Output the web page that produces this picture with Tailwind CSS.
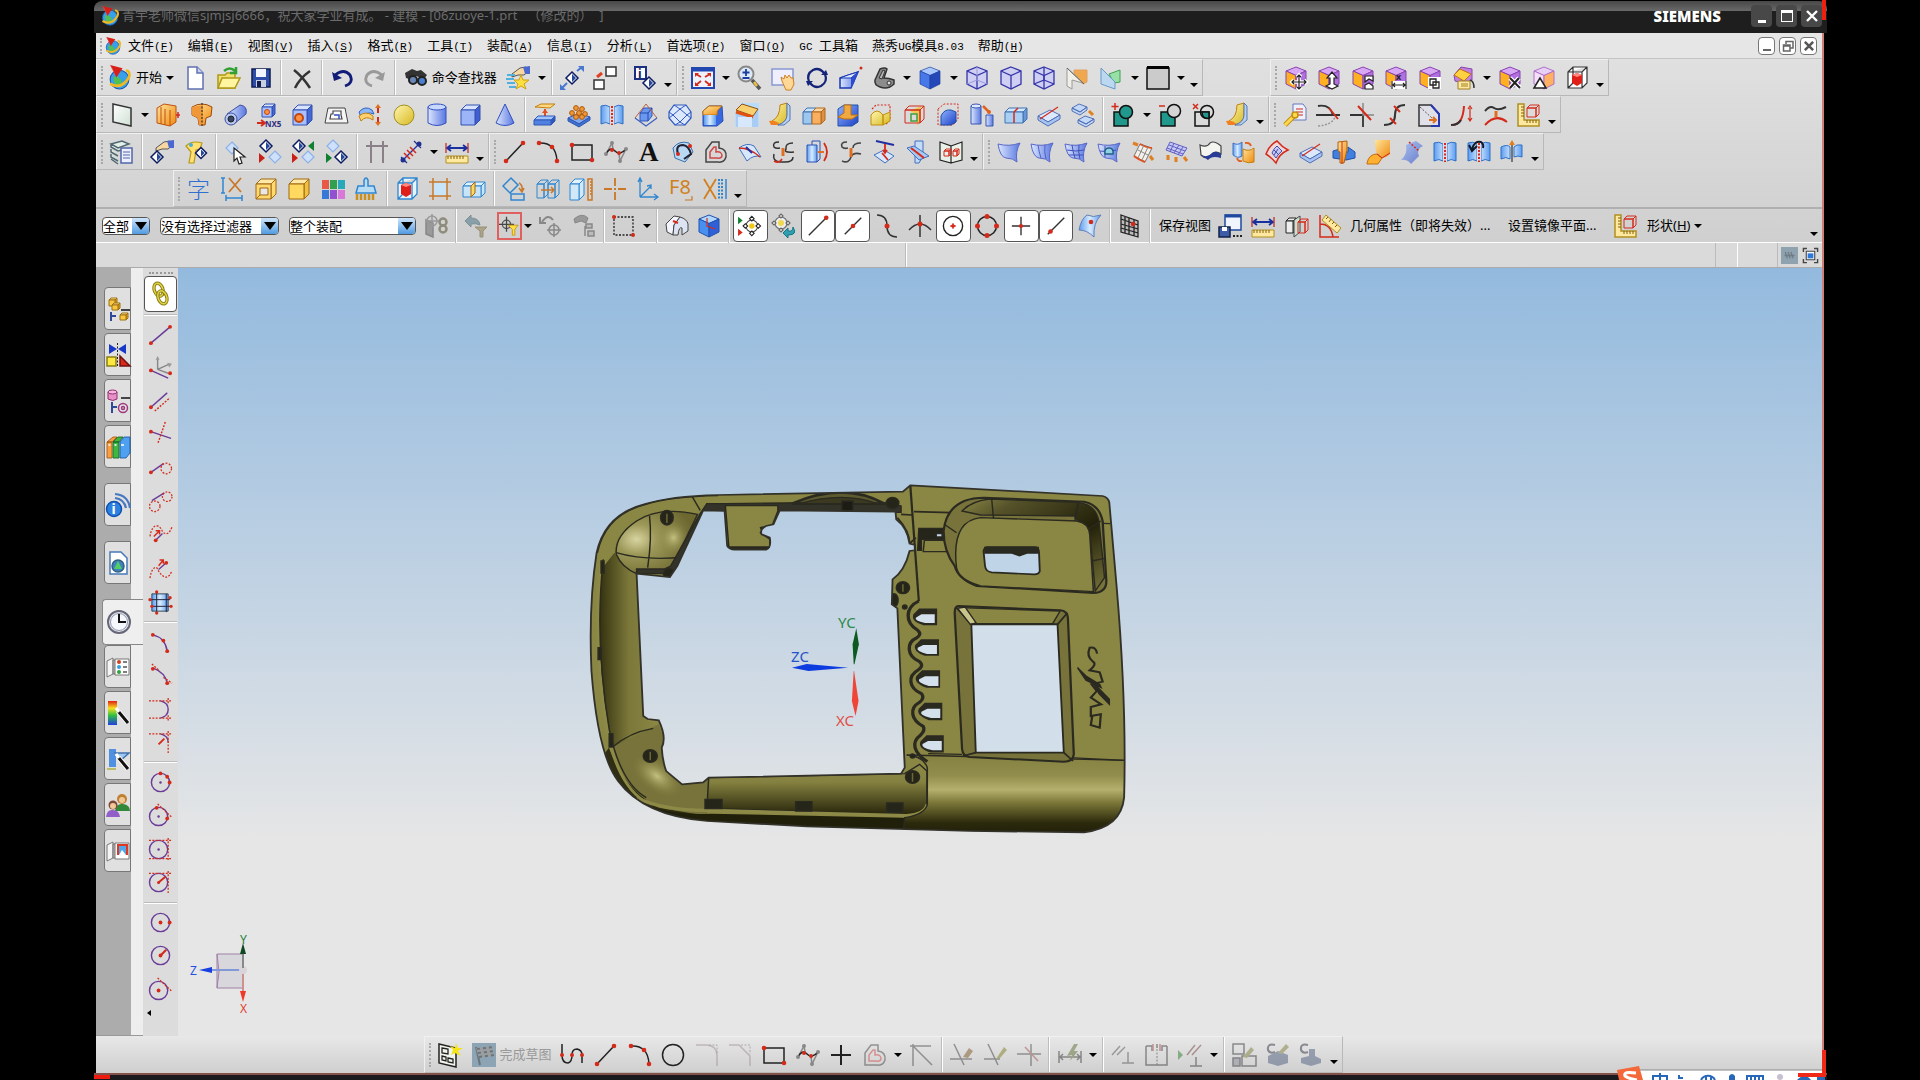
<!DOCTYPE html>
<html lang="zh-CN">
<head>
    <meta charset="UTF-8">
    <meta name="viewport" content="width=device-width, initial-scale=1.0">
    <title>建模 - [06zuoye-1.prt]</title>
    <script src="https://cdn.jsdelivr.net/npm/@tailwindcss/browser@4"></script>
</head>
<body class="bg-black font-['Noto_Sans','Noto_Sans_CJK_SC',sans-serif] text-[13px] text-black">
<!-- shared paints -->
<svg class="absolute w-0 h-0" aria-hidden="true">
    <defs>
        <linearGradient id="gB" x2="1"><stop stop-color="#dbe6ff"/><stop offset="1" stop-color="#5a78e0"/></linearGradient>
        <linearGradient id="gD" x2="1" y2="1"><stop stop-color="#8fb4ff"/><stop offset="1" stop-color="#1c3fc4"/></linearGradient>
        <linearGradient id="gC" x2="1"><stop stop-color="#5c9cf0"/><stop offset=".5" stop-color="#d8ecff"/><stop offset="1" stop-color="#5c9cf0"/></linearGradient>
        <linearGradient id="gO" x2="1" y2="1"><stop stop-color="#ffe49a"/><stop offset="1" stop-color="#f08a10"/></linearGradient>
        <linearGradient id="gY" x2="1" y2="1"><stop stop-color="#fff6b0"/><stop offset="1" stop-color="#d8b820"/></linearGradient>
        <linearGradient id="gW" x2="1" y2="1"><stop stop-color="#fff"/><stop offset="1" stop-color="#cfe0d4"/></linearGradient>
        <linearGradient id="gR" x2="0" y2="1"><stop stop-color="#e02010"/><stop offset=".3" stop-color="#f8e020"/><stop offset=".6" stop-color="#30c040"/><stop offset="1" stop-color="#2040e0"/></linearGradient>
    </defs>
</svg>

<div class="min-h-screen flex flex-col ml-[94px] mr-[93px] pt-px">
    <header class="h-8 flex items-center shrink-0 rounded-t-lg pl-1.5 pb-0.5 bg-linear-to-b from-[#484848] from-0% via-[#686868] via-30% to-[#1e1e1e] to-30%">
        <span data-icon="logo" class="w-5 h-5"></span>
        <h1 class="ml-0.5 text-[#6c6c6c] whitespace-pre">青宇老师微信sjmjsj6666，祝大家学业有成。 - 建模 - [06zuoye-1.prt   （修改的）  ]</h1>
        <span class="ml-auto font-black text-white text-[15px]">SIEMENS</span>
        <div class="flex gap-1 ml-[30px] mr-[5px]">
            <button class="w-[21px] h-[22px] rounded-sm bg-[#484848] flex items-end justify-center pb-1"><span class="w-2 h-[3px] bg-white"></span></button>
            <button class="w-[21px] h-[22px] rounded-sm bg-[#484848] flex items-center justify-center"><span class="w-3 h-3 border border-t-3 border-white"></span></button>
            <button class="w-[21px] h-[22px] rounded-sm bg-[#484848] flex items-center justify-center"><svg class="w-3 h-3" viewBox="0 0 12 12"><path d="M1 1L11 11M11 1L1 11" stroke="#fff" stroke-width="2.4"/></svg></button>
        </div>
    </header>

    <div class="flex-1 flex flex-col ml-0.5 mr-[3px] border-r-2 border-[#d08078] bg-[#e6e6e6]">
        <nav class="h-[26px] flex items-center shrink-0 bg-[#e6e6e6] border-b border-[#c4c4c4]">
            <span class="w-[3px] h-4 ml-1 border-l-2 border-dotted border-[#aaa]"></span>
            <span data-icon="logo" class="w-[18px] h-[18px] ml-px mr-1.5"></span>
            <div id="menu" class="flex gap-[14px] whitespace-pre"></div>
            <div class="flex gap-1 ml-auto mr-[5px]">
                <button class="w-[17px] h-[18px] rounded border border-[#777] bg-white flex items-end justify-center pb-[3px]"><span class="w-2 h-0.5 bg-[#666]"></span></button>
                <button class="w-[17px] h-[18px] rounded border border-[#777] bg-white flex items-center justify-center"><svg class="w-3 h-3" viewBox="0 0 12 12"><path d="M4 4V1.500H11V8H8M1.500 5H8V11H1.500ZM1 6H8" fill="none" stroke="#666" stroke-width="1.500"/></svg></button>
                <button class="w-[17px] h-[18px] rounded border border-[#777] bg-white flex items-center justify-center"><svg class="w-2.5 h-2.5" viewBox="0 0 12 12"><path d="M1 1L11 11M11 1L1 11" stroke="#555" stroke-width="3"/></svg></button>
            </div>
        </nav>

        <section class="shrink-0 bg-linear-to-b from-[#e0e0e0] to-[#cdcdcd]">
            <div class="flex h-[37px]">
                <div class="w-[581px]" data-tools="start new open save | del | undo redo | find roles v | move assem | info low"></div>
                <div class="w-[526px]" data-tools="fit v zoom pan rotate persp csys v shade v wire1 wire2 wire3 clipO clipG v bgbox v low"></div>
                <div class="w-[339px] ml-[67px]" data-tools="fMove fPull fOff fDim fPat fCopy v fDel fGrp redbox low"></div>
            </div>
            <div class="flex h-[37px]">
                <div class="w-[1173px]" data-tools="datum v extrude revolve tube nx5 hole pocket offs sphere cyl cube cone | emboss bumps sew brep mesh blend chamf draft split shell boxY boxR boxB inst trim sheet sheets | unite v subtr inter bend low"></div>
                <div class="w-[292px]" data-tools="wrench crvA crvB crvC sect crvD crvE gauge low"></div>
            </div>
            <div class="flex h-[37px]">
                <div class="w-[393px]" data-tools="layers | show paint | sel hide1 hide2 hide3 | grid2 measure v ruler low"></div>
                <div class="w-[494px]" data-tools="line arc rect spline letter offc offp proj join wrapc bridge projd isect mirror low"></div>
                <div class="w-[561px]" data-tools="surf1 surf2 surf3 surf4 surf5 surf6 surf7 surf8 surf9 sheet cross bendO surfT sew sewU sewP low"></div>
            </div>
            <div class="flex h-[37px]">
                <div class="w-[574px] ml-[77px]" data-tools="zi dimX boxO boxS colors brush | redboxB frame boxT | rotT arrT rulT crossT axesT f8 xii low"></div>
            </div>
            <!-- selection bar -->
            <div class="flex items-center h-9 border-t-2 border-[#b0b0b0] border-b border-b-white pl-1.5">
                <label class="combo w-12"><select aria-label="类型"><option>全部</option></select></label>
                <label class="combo w-[119px] ml-2.5"><select aria-label="过滤器"><option>没有选择过滤器</option></select></label>
                <label class="combo w-[127px] ml-2.5"><select aria-label="范围"><option>整个装配</option></select></label>
                <div class="w-[733px] ml-1 mr-1" data-tools="asmG | filtG *filtR v undoG pinG | selbox v | faceW cubeR | *snap0 snap1 *snapE *snapM snapC snapX *snapO snapQ *snapP *snapL snapF | gridR |" data-plain></div>
                <button class="w-14">保存视图</button>
                <div class="w-[134px] mr-[3px]" data-tools="saveV ruler mirR ang" data-plain></div>
                <button class="whitespace-pre w-[158px] text-left">几何属性（即将失效）...</button>
                <button class="whitespace-pre w-[101px] text-left">设置镜像平面...</button>
                <div class="w-[34px]" data-tools="gauge" data-plain></div>
                <button class="flex items-center gap-1 ml-1"><span>形状(<u>H</u>)</span> <i class="tri"></i></button>
                <i class="tri ml-auto mr-1 self-end mb-1.5"></i>
            </div>
            <div class="flex h-[25px] bg-[#dadada] border-b border-[#aaa]">
                <span class="w-[810px] border-r border-[#bbb]"></span>
                <span class="flex-1 border-l border-white border-r border-r-[#bbb]"></span>
                <span class="w-[22px] border-r border-white"></span>
                <span class="w-10 border-r border-[#bbb]"></span>
                <span class="w-[44px] flex gap-1 items-center pl-[3px]">
                    <span data-icon="flagS" class="w-[17px] h-[17px] bg-[#8ea2b0]"></span>
                    <span data-icon="full" class="w-[17px] h-[17px]"></span>
                </span>
            </div>
        </section>

        <main class="flex-1 flex">
            <!-- resource bar -->
            <aside id="tabs" class="w-[47px] bg-linear-to-r from-[#acacac] from-75% to-[#eee] to-75% flex flex-col pt-[19px] border-b border-[#999]"></aside>
            <div class="w-[35px] bg-[#dcdcdc] flex flex-col items-center pb-[14px]">
                <span class="w-6 h-0.5 mt-1 mb-0.5 border-t-2 border-dotted border-[#999]"></span>
                <div id="palette" class="flex-1 flex flex-col w-full px-px"></div>
                <span class="self-start w-0 h-0 ml-1 mb-1.5 mt-1 border-y-3 border-y-transparent border-r-4 border-r-black"></span>
            </div>
            <div class="flex-1 relative overflow-hidden bg-linear-to-b from-[#93bade] to-[#e6e6e6] to-75%">
                <svg class="absolute left-[392px] top-[203px] w-[580px] h-[380px]" viewBox="0 0 1568 1140" preserveAspectRatio="none">
                    <defs>
                        <linearGradient id="mBot" x2="0" y2="1"><stop stop-color="#858141"/><stop offset=".25" stop-color="#918d4c"/><stop offset=".42" stop-color="#b5b06c"/><stop offset=".58" stop-color="#7a7638"/><stop offset=".82" stop-color="#2c2a0c"/><stop offset="1" stop-color="#1c1b08"/></linearGradient>
                        <linearGradient id="mStrip" x2="0" y2="1"><stop stop-color="#8d8947"/><stop offset=".35" stop-color="#858140"/><stop offset="1" stop-color="#26240a"/></linearGradient>
                        <linearGradient id="mLeft" x2="1"><stop stop-color="#33310f"/><stop offset=".5" stop-color="#7c783a"/><stop offset="1" stop-color="#8a8644"/></linearGradient>
                        <linearGradient id="mWell" x2="1" y2="1"><stop stop-color="#8a8644"/><stop offset=".2" stop-color="#55522a"/><stop offset=".6" stop-color="#222109"/><stop offset="1" stop-color="#77733a"/></linearGradient>
                        <radialGradient id="mDome" cx=".25" cy=".45" r=".7"><stop stop-color="#d8d4a0"/><stop offset=".35" stop-color="#9c9858"/><stop offset="1" stop-color="#6c6830"/></radialGradient>
                        <radialGradient id="mGlow"><stop stop-color="#c4c080"/><stop offset="1" stop-color="#8a8644" stop-opacity="0"/></radialGradient>
                        <clipPath id="mClip"><path clip-rule="evenodd" d="M920,43L1440,75Q1455,78 1458,95L1478,350Q1505,700 1498,980Q1490,1070 1390,1084L1080,1080L640,1066L370,1050Q200,1035 130,930Q75,850 58,600Q50,400 72,245Q95,130 200,100Q270,75 400,72L900,62ZM360,118L418,120L425,225Q430,236 445,236L530,236Q545,230 540,200L518,190Q512,175 530,165L550,160L567,118L880,122L882,145Q912,170 918,218L932,222V238L918,240Q905,300 872,325L870,400L885,412L905,890L895,908L375,920L360,934L303,940L260,900Q250,870 248,830Q262,800 240,748L210,744L198,735L180,308L270,318L290,285Z"/></clipPath>
                    </defs>
                    <g clip-path="url(#mClip)" stroke="#2b2a20" stroke-width="4" fill="none">
                        <path d="M0,0H1568V1140H0Z" fill="#8a8644" stroke="none"/>
                        <path d="M120,245Q150,300 182,308L200,740L240,770L118,826Q60,600 88,290Z" fill="url(#mLeft)" stroke="none"/>
                        <path d="M118,826L240,760L303,940L375,920L370,1040Q240,1040 170,960Q125,890 118,826Z" fill="#77733a" stroke="none"/>
                        <ellipse cx="235" cy="915" rx="80" ry="45" transform="rotate(42 235 915)" fill="url(#mGlow)" stroke="none"/>
                        <path d="M105,830Q150,960 240,1010L370,1035V1070H150L60,900Z" fill="#1f1e0a" stroke="none" opacity=".85"/>
                        <path d="M72,245Q95,130 200,100Q270,75 400,72" stroke-width="8"/>
                        <path d="M375,920L905,908L945,880L965,900V1000Q960,1030 920,1032L370,1012Z" fill="url(#mStrip)"/>
                        <path d="M180,980Q250,1018 370,1018L910,1034Q960,1030 966,1000" stroke="#8d8947" stroke-width="10"/>
                        <path d="M150,960Q220,1036 380,1028L900,1040L1100,1060V1100H100Z" fill="#201f0a" stroke="none"/>
                        <path d="M910,852L1500,868V1100H900L905,1040Q960,1030 966,1000V890Q955,855 910,852Z" fill="url(#mBot)"/>
                        <path d="M84,270Q60,500 100,780Q130,940 200,990" stroke="#8d8947" stroke-width="8"/>
                        <path d="M90,265Q66,500 106,775Q136,935 206,980M118,826Q160,785 225,772M330,76L352,118"/>
                        <!-- upper left dome -->
                        <path d="M345,130Q240,105 180,150Q120,195 125,250Q140,290 180,308L270,300Z" fill="url(#mDome)"/>
                        <ellipse cx="280" cy="200" rx="40" ry="50" fill="url(#mGlow)" stroke="none"/>
                        <path d="M215,135Q222,200 210,290M125,245Q200,270 310,258"/>
                        <path d="M180,294H255L272,285L352,128L370,98H420L640,95L860,96L895,105V124H360L290,290L270,322L250,308H180Z" fill="#34332a"/>
                        <path d="M420,104H562V120L548,160L515,185L540,205V236H430Z" fill="#8a8644"/>
                        <path d="M425,228H540V240H425ZM515,170Q545,160 552,180L536,192Q520,190 515,170Z" fill="#2b2a20"/>
                        <path d="M600,98Q740,30 850,98Z" fill="#5d5a30" stroke-width="8"/>
                        <path d="M620,98Q740,60 830,98Z" fill="#3b3920"/>
                        <path d="M735,90H765V124H735Z" fill="#1c1b14"/>
                        <!-- right body seams -->
                        <path d="M920,43L943,390" stroke-width="6"/>
                        <path d="M943,390C905,410 905,455 940,478C950,488 945,494 938,500C908,515 910,555 945,572C955,582 950,590 942,596C912,615 915,650 950,668C958,678 952,688 945,694C916,712 922,748 955,766C960,776 955,784 948,792C920,815 930,845 966,872" stroke-width="9"/>
                        <path d="M895,130L925,132M930,122L1030,125M885,140Q918,180 918,218L935,200" stroke-width="5"/>
                        <path d="M943,172H1010V205H950V238H940Z" fill="#26251a"/>
                        <path d="M958,208H1015L1022,242H955Z" fill="#8a8644"/>
                        <path d="M990,188h16v10h-16z" fill="#c3d7e6"/>
                        <!-- pocket -->
                        <path d="M1010,180Q1020,80 1120,80L1390,92Q1430,100 1440,150L1450,330Q1450,365 1415,366L1100,345Q1050,325 1040,285Q1010,240 1010,180Z" fill="#77733a" stroke-width="6"/>
                        <path d="M1060,120Q1085,90 1135,84L1375,94L1365,135L1110,132ZM1375,95Q1420,100 1430,150L1445,320L1420,360L1405,180L1365,140Z" fill="url(#mWell)"/>
                        <path d="M1045,290Q1030,150 1110,140L1370,150Q1402,155 1405,190L1415,362L1110,345Q1050,325 1045,290Z" fill="#8a8644"/>
                        <path d="M1375,92L1365,150M1140,84L1145,142M1012,160L1045,185M1440,157L1460,158M1400,175L1435,150M1410,270L1445,262"/>
                        <path d="M1350,860L1500,868M968,848L1060,850"/>
                        <!-- screen bezel -->
                        <path d="M1050,405L1325,418Q1345,420 1346,440L1362,850Q1360,872 1335,872L1080,858Q1062,855 1060,835L1040,425Q1040,405 1050,405Z" fill="#77733a" stroke-width="6"/>
                        <path d="M1045,410L1085,460H1318L1345,425M1097,845L1062,855M1335,845L1360,870" stroke-width="5"/>
                        <path d="M1055,410L1325,420L1305,458H1095Z" fill="#8a8644"/>
                        <path d="M1048,412L1068,408L1098,456L1082,460Z" fill="#c9c48c"/>
                        <!-- logo engraving -->
                        <path d="M1425,548Q1422,526 1405,530Q1395,556 1414,572Q1425,580 1405,598L1432,604L1440,632L1410,640L1424,660L1408,680L1436,700L1408,708V735L1435,730L1432,770L1408,762L1412,735" stroke-width="6"/>
                        <path d="M1372,590L1395,615L1432,640L1436,650L1395,628ZM1412,632L1458,685V700L1430,668Z" fill="#2b2a20"/>
                        <g fill="#26251a">
                            <ellipse cx="262" cy="140" rx="17" ry="22"/><circle cx="268" cy="308" r="15"/><circle cx="872" cy="96" r="17"/>
                            <circle cx="900" cy="350" r="18"/><circle cx="905" cy="408" r="6"/><ellipse cx="876" cy="388" rx="11" ry="20"/>
                            <circle cx="217" cy="855" r="19"/><circle cx="926" cy="918" r="19"/><circle cx="926" cy="855" r="6"/>
                            <path d="M365,985h46v28h-46zM610,992h44v28h-44zM856,996h44v28h-44zM76,530h8v36h-8zM106,788h10v40h-10zM84,270h8v36h-8z"/>
                        </g>
                        <path d="M262,128V156M900,340V362M217,842V868M926,906V932" stroke="#6c6832"/>
                    </g>
                    <g stroke="#2b2a20" stroke-width="5">
                        <path d="M1085,460H1318L1335,845H1097Z" fill="#d2deea"/>
                        <path d="M1128,228H1258Q1268,230 1268,245L1270,300Q1268,310 1255,310L1140,304Q1124,302 1122,285L1118,240Q1120,228 1128,228Z" fill="#bfd4e6"/>
                        <path d="M1122,230H1265V246H1235L1215,254L1195,246H1122Z" fill="#2b2a20"/>
                        <g fill="#2b2a20"><path d="M945,415H990V460H955Q925,450 930,432ZM950,507H995V552H960Q930,540 935,524ZM953,600H998V648H965Q932,635 938,617ZM960,698H1004V745H970Q938,730 945,715ZM965,795H1008V842H975Q942,830 950,812Z"/></g>
                        <g fill="#d4e0ec" stroke="none"><path d="M950,430H986V456H960Q930,448 935,440ZM955,522H992V549H965Q935,540 940,530ZM960,616H996V645H970Q938,635 944,625ZM966,713H1001V741H976Q944,732 950,722ZM968,810H1005V838H980Q948,830 953,819Z"/></g>
                    </g>
                    <path d="M920,43L1440,75Q1455,78 1458,95L1478,350Q1505,700 1498,980Q1490,1070 1390,1084L1080,1080L640,1066L370,1050Q200,1035 130,930Q75,850 58,600Q50,400 72,245Q95,130 200,100Q270,75 400,72L900,62ZM418,120L425,225Q430,236 445,236L530,236Q545,230 540,200L518,190Q512,175 530,165L550,160L567,118L880,122L882,145Q912,170 918,218L932,222V238L918,240Q905,300 872,325L870,400L885,412L905,890L895,908L375,920L360,934L303,940L260,900Q250,870 248,830Q262,800 240,748L210,744L198,735L180,308L270,318L290,285L360,118Z" fill="none" stroke="#33322a" stroke-width="5"/>
                    <path d="M767,580L764,520L774,472L781,520L769,580Z" fill="#0c5a20"/>
                    <path d="M767,600L762,690L772,735L780,690L768,600Z" fill="#f04438"/>
                    <path d="M752,590L640,579L600,590L645,600Z" fill="#0c3ce0"/>
                </svg>
                <!-- axis names -->
                <svg class="absolute left-[600px] top-[330px] w-24 h-36 text-[15px]" viewBox="0 0 96 144">
                    <text x="60" y="30" fill="#2c8a4c">YC</text><text x="13" y="64" fill="#2454c8">ZC</text><text x="58" y="128" fill="#e05048">XC</text>
                </svg>
                <svg class="absolute left-3 bottom-[18px] w-16 h-[88px] text-[12px]" viewBox="0 -4 64 88">
                    <path d="M27 20H53V54H27Z" fill="#d8d8dc" stroke="#a080a8"/><path d="M27 20L29 38L27 54" fill="none" stroke="#a080a8"/>
                    <path d="M52 36H18" stroke="#8098d8" stroke-width="2"/><circle cx="53" cy="36" r="4" fill="#d8d4d8"/>
                    <path d="M53 34V18" stroke="#888" stroke-width="2"/><path d="M50 20L53 9L56 20Z" fill="#104820"/>
                    <path d="M53 40V58" stroke="#d09090" stroke-width="2"/><path d="M50 57H56L53 68Z" fill="#f03828"/><path d="M22 33L9 36L22 39Z" fill="#1840e0"/>
                    <text x="50" y="10" fill="#208040">Y</text><text x="0" y="41" fill="#2050e0">Z</text><text x="50" y="79" fill="#e04030">X</text>
                </svg>
            </div>
        </main>

        <footer class="h-[37px] shrink-0 flex bg-linear-to-b from-[#e8e8e8] to-[#cfcfcf] pl-[328px]">
            <div class="w-[919px]" data-tools="sketch finish prof line arc circ ~fil ~cha rect spline plus ~offp v ~tri1 | ~trm ~ext ~cor | ~adim v | ~cons ~sym ~auto v | ~pat ~proA ~proB low"></div>
        </footer>
    </div>
    <div class="h-[7px] shrink-0 bg-[#1a1a1e] border-t-2 border-[#84504a] flex justify-between"><span class="w-4 h-1 bg-[#ee1c10]"></span></div>
</div>

<!-- recorder corner marks and the input method bar -->
<div class="absolute top-0 right-[94px] w-1 h-5 bg-[#f02010]"></div>
<div class="fixed bottom-0 right-[95px] w-52 h-[14px] overflow-hidden">
    <svg class="w-52 h-[14px]" viewBox="0 0 208 14">
        <path d="M18 4H208V14H18Z" fill="#fff"/><path d="M18 4H208" stroke="#888"/>
        <path d="M0 4L22 0L26 14H2Z" fill="#f4683a"/><path d="M19 7Q6 5 8 10Q12 13 20 14" stroke="#fff" stroke-width="3" fill="none"/>
        <g fill="none" stroke="#2868b8" stroke-width="2"><path d="M36 14V10H50V14M43 7V14M62 9V12H66M84 14A8 8 0 0 1 98 14M89 11V14M94 11V14M130 14V10H146V14M134 10V14M138 10V14M142 10V14"/></g>
        <path d="M112 14V10Q115 6 118 10V14ZM180 14Q188 6 194 14ZM200 14V10H208V14Z" fill="#2868b8"/><circle cx="163" cy="11" r="3" fill="#c8c0d0"/>
    </svg>
</div>
<div class="fixed bottom-[3px] right-[94px] w-7 h-[27px] border-r-4 border-b-4 border-[#f02818]"></div>

<script>
const RED = '#d42a1a', OR = '#c87828', SK = '#2f86d0', PU = '#6a3c98';
const p = (d, s = 'none', f = 'none', w = 1.5, x = '') => `<path d="${d}" stroke="${s}" fill="${f}" stroke-width="${w}" ${x}/>`;
const dot = (x, y, r = 2, c = RED) => `<circle cx="${x}" cy="${y}" r="${r}" fill="${c}"/>`;
const ring = (x, y, r, s = '#222', f = 'none', w = 1.5, x2 = '') => `<circle cx="${x}" cy="${y}" r="${r}" stroke="${s}" fill="${f}" stroke-width="${w}" ${x2}/>`;
const txt = (x, y, size, fill, t, cls = '') => `<text x="${x}" y="${y}" font-size="${size}" fill="${fill}" class="${cls}">${t}</text>`;
const DASH = 'stroke-dasharray="2 1.5"';
// dark strokes over a white halo
const halo = (d, w = 1.5) => p(d, '#fff', 'none', w + 2.5) + p(d, '#222', 'none', w);
// oblique box: front face, then top and side with depth d
const box = (x, y, w, h, d, f, t, s, st) =>
    p(`M${x} ${y}l${d} ${-d}h${w}l${-d} ${d}Z`, st, t, 1) + p(`M${x + w} ${y}l${d} ${-d}v${h}l${-d} ${d}Z`, st, s, 1) + p(`M${x} ${y}h${w}v${h}h${-w}Z`, st, f, 1);
// isometric cube
const iso = (l, t, r, st, w = 1) => p('M12 1L22 5L12 9.500L2 5Z', st, t, w) + p('M2 5L12 9.500V23L2 18Z', st, l, w) + p('M22 5L12 9.500V23L22 18Z', st, r, w);
const diamond = (x, y, r, dark = true) => dark
    ? p(`M${x} ${y - r}L${x + r} ${y}L${x} ${y + r}L${x - r} ${y}Z`, '#0c1c60', '#fff', 1.5) + p(`M${x} ${y - r + 2}L${x + r - 2} ${y}L${x} ${y + r - 2}Z`, 'none', '#26489c')
    : p(`M${x} ${y - r}L${x + r} ${y}L${x} ${y + r}L${x - r} ${y}Z`, '#8cb0e8', '#cfe0fb', 1.2);
const ruler = (x, y, w) => p(`M${x} ${y}h${w}v7h${-w}Z`, '#b09020', '#ffe9a0', 1) + p(`M${x + 2} ${y}v3m3 -3v3m3 -3v3m3 -3v3m3 -3v3m3 -3v3`, '#806010', 'none', 1);
const feat = iso('#ffb020', '#d9a8f4', '#b070e0', '#8844b0');
const wire = (x) => p('M12 1L22 5V18L12 23L2 18V5Z', '#3434a8', '#cfcff4', 1.3) + p('M2 5L12 9.500L22 5M12 9.500V23', '#3434a8', 'none', 1.3) + x;
const patch = (x = '') => p('M1 4Q12 7 23 3Q18 12 20 22Q16 18 9 18Q3 17 1 4Z', '#5868c8', 'url(#gB)', 1) + x;
const book = p('M1 3Q6 1 10 4V21Q6 18 1 21ZM23 3Q18 1 14 4V21Q18 18 23 21Z', '#2c70c8', 'url(#gC)', 1) + p('M10 4h4v17h-4Z', 'none', '#e8d8e0') + p('M12 3V22', RED, 'none', 2, DASH);
const hand = p('M10 5L14 2L20 1L23 5L18 9L12 9L6 11L6 8Z', '#555', '#f8d8a0', 1) + p('M17 1L24 0V8L19 8Z', 'none', '#4a68d0');
const globe = ring(12, 14, 9, '#1858b0', '#38a0e8', 1) + p('M6 12Q10 9 12 13Q16 15 12 21Q6 19 6 12Z', 'none', '#50c050') + p('M3 18Q14 24 21 12Q23 6 18 5', '#f0b820', 'none', 2.5) + p('M3 0L15 3L9 12Z', 'none', '#d82018') + p('M3 0L9 12L5 3Z', 'none', '#f88070');
const book3 = p('M1 7L7 2H11L6 7ZM1 7H6V23H1Z', '#a05010', '#f8a040', .8) + p('M7 7L12 2H17L13 7ZM7 7H13V23H7Z', '#106020', '#40b840', .8) + p('M14 7L18 2H24V18L20 23H14Z', '#1050a0', '#50a0f0', .8) + p('M2.500 10h2M8.500 10h2M15 10h3', '#fff');
const wand = p('M12 10L22 22', '#fff', 'none', 5) + p('M12 10L22 22', '#111', 'none', 3) + p('M10 7L13 11', '#fff', 'none', 3);
const folder = p('M1 6L7 3V19L1 22ZM7 5H9V19H7Z', '#777', '#f4f4f4', 1) + p('M9 4H23V20H9Z', '#777', '#fff', 1);
const link = (cx, cy) => `<ellipse cx="${cx}" cy="${cy}" rx="4.500" ry="7" transform="rotate(-20 ${cx} ${cy})" fill="none" stroke="#8a7c10" stroke-width="3.500"/><ellipse cx="${cx}" cy="${cy}" rx="4.500" ry="7" transform="rotate(-20 ${cx} ${cy})" fill="none" stroke="#e0d448" stroke-width="1.500"/>`;
const ICONS = {
    logo: globe, start: globe,
    new: p('M5 1H14L20 7V23H5Z', '#6070b0', '#fff') + p('M14 1V7H20', '#6070b0', '#c8d0f0'),
    open: p('M2 9H9L11 7H19V22H2Z', '#b09818', '#f0e070') + p('M2 22L6 12H24L19 22Z', '#b09818', '#fff4a0') + p('M8 5Q14 0 19 5M20 1V7H14', '#30a030', 'none', 2.5),
    save: p('M3 3H21V21H3Z', '#101c50', '#2c4ca8') + p('M7 3H17V11H7Z', 'none', '#f0f4ff') + p('M7 14H17V21H7Z', 'none', '#c8d0e0') + p('M8 15H12V21H8Z', 'none', '#101c50'),
    del: p('M4 4Q12 10 20 22M20 5Q10 12 5 22', '#333', 'none', 2.5),
    undo: p('M5 9Q14 2 20 9Q24 17 15 20', '#101c78', 'none', 2.8) + p('M2 6L4 15L12 12Z', 'none', '#101c78'),
    redo: p('M19 9Q10 2 4 9Q0 17 9 20', '#999', 'none', 2.8) + p('M22 6L20 15L12 12Z', 'none', '#999'),
    find: p('M1 7L8 3L13 5L17 4L23 9L20 13L12 10L8 14L2 12Z', 'none', '#333') + ring(9, 14, 4, '#222', '#6a88b8', 2) + ring(18, 15, 4, '#222', '#4a80d0', 2),
    roles: hand + p('M1 9H9M0 13H8M1 17H9M3 21H10', '#50b0e0', 'none', 2) + p('M15 9L17 14L23 14L18 18L20 23L15 20L10 23L12 18L8 14L13 14Z', '#d0a010', '#ffe040', 1),
    move: diamond(12, 12, 6) + p('M17 5L22 1M7 17L2 22', '#4878d0', 'none', 2) + p('M18 0H24V6ZM0 18V24H6Z', 'none', '#4878d0'),
    assem: p('M13 1H23V10H13ZM1 14H11V23H1Z', '#333', '#fff') + p('M4 11L9 7', '#e04020', 'none', 3),
    info: p('M2 1H13V13H2Z', '#1c2f80', '#fff', 2) + txt(5, 12, 12, '#101c60', 'i', 'font-bold') + diamond(16, 17, 6),
    fit: p('M1 2H23V22H1Z', '#2048b0', '#eef2fc', 2) + p('M1 4H23', '#2048b0', 'none', 3) + p('M5 8L10 11M19 8L14 11M5 19L10 15M19 19L14 15', RED, 'none', 1.8) + p('M4 7h4l-4 4ZM20 7h-4l4 4ZM4 20h4l-4 -4ZM20 20h-4l4 -4Z', 'none', RED),
    zoom: ring(9, 8, 7.5, '#888', '#dceaf8', 2) + p('M9 3V10M5.500 6.500H12.500M5.500 12H12.500', '#1c3ca0', 'none', 1.8) + p('M15 14L23 23', '#555', 'none', 3.5) + p('M17 16L20 20', '#f0c040', 'none', 2.5),
    pan: p('M1 3H22V19H1Z', '#8898d0', '#eef', 1.5) + p('M11 15L10 11L13 13L14 9L16 12L18 9L20 12L22 12L23 18L20 24H15Z', '#d08020', '#ffd898', 1),
    rotate: p('M4 16Q1 8 8 4Q14 1 19 7M20 8Q23 16 16 20Q10 23 5 17', '#142478', 'none', 2.2) + p('M16 9L23 9L21 4ZM8 15L1 15L3 20Z', 'none', '#142478'),
    persp: p('M2 12L20 6L16 15L13 22H2Z', '#1838b0', 'url(#gB)') + p('M2 12L10 9L20 6L13 12Z', '#1838b0', '#dce8ff', 1) + p('M13 12L20 6L16 17L13 22Z', 'none', '#2c4cd0') + dot(23, 2, 1.5),
    csys: p('M3 14L8 3Q13 1 15 3L12 12Q17 12 22 14V18Q16 24 8 21Q2 19 3 14Z', '#333', '#8c8c8c') + p('M7 12L11 4L13 5L10 13Z', '#333', '#b8b8b8', 1) + ring(17, 17, 2, '#333', '#ddd', 1),
    shade: iso('#4878e8', '#a8c8ff', '#2448b8', '#2040a0', .7),
    wire1: wire(p('M12 1V14L2 18M12 14L22 18', '#9a9ad8', 'none', 1)), wire2: wire(''), wire3: wire(p('M12 1V14L2 18M12 14L22 18', '#3434a8', 'none', 1.3)),
    clipO: p('M8 4H21V16L17 18L8 7Z', '#e0a060', '#f0a850', 1) + p('M1 2L17 17L6 14V23L1 20Z', '#999', '#f0f0e8', 1) + p('M1 2L18 18', '#666', 'none', 1),
    clipG: p('M9 8L20 4V16L14 17Z', '#40a050', '#98e0a8', 1) + p('M1 2L15 16V23L1 18Z', '#6898c8', '#bcd8f0', 1),
    bgbox: p('M1 2H23V23H1Z', '#111', '#cbcbcb') + p('M1 1.500H23', '#000', 'none', 3),
    fMove: feat + halo('M15 9V23M8 16H22M13 11L15 9L17 11M13 21L15 23L17 21M10 14L8 16L10 18M20 14L22 16L20 18', 1.2),
    fPull: feat + p('M13 18V12H10L15 6L20 12H17V18L21 20L15 23L9 20Z', '#222', '#fff', 1.2),
    fOff: feat + p('M14 10H22V15L18 13L14 16ZM14 19L18 17L22 20V23H14Z', '#222', '#fff', 1.2),
    fDim: feat + p('M7 15H23V23H7Z', 'none', '#fff') + p('M8 15V23M22 15V23M9 19H21M11 17L9 19L11 21M19 17L21 19L19 21', '#222', 'none', 1.2) + txt(12, 14, 9, '#222', 'x', 'font-bold'),
    fPat: feat + p('M10 11H23V23H10Z', 'none', '#fff', 1) + p('M12 13H18V19H12ZM15 16H21V22H15Z', '#222', 'none', 1.3),
    fCopy: p('M2 9L9 1L20 3V14L12 17L3 15Z', '#8844b0', '#c080e0', 1) + p('M2 9L8 3L19 8L12 15Z', '#c07010', '#ffd040', 1) + p('M6 15H18V23H6Z', '#a08020', '#ffe8a0', 1) + p('M9 18H16M9 20H16', '#a08020', 'none', 1) + p('M18 14Q22 15 22 22', '#333', 'none', 1.5),
    fDel: feat + halo('M12 12L22 22M21 12L12 22', 2),
    fGrp: iso('#f4e0f8', '#e8d0f4', '#ffb060', '#b070c8') + p('M2 22L8 12L14 22Z', '#222', '#fff'),
    redbox: p('M3 6L8 1H22V17L17 22H3ZM3 6H17L22 1M17 6V22M8 1V17M8 17L3 22', '#333', '#fff', 1.2) + p('M7 9L12 7L17 9V17L12 20L7 17Z', 'none', '#e02018') + p('M7 9L12 7L17 9L12 11Z', 'none', '#ff8880'),
    datum: p('M3 1L21 5V23L3 19Z', '#333', 'url(#gW)'),
    extrude: p('M1 5L8 1L20 3V19L14 23L1 20Z', '#c05010', 'url(#gO)', 1) + p('M5 4V21M9 6V22M14 7V23', '#c05010', 'none', 1) + p('M20 12H24M22 9V15', RED),
    revolve: p('M2 4Q12 -2 22 4L21 13L16 15L15 22H9L8 15L2 12Z', '#a04808', 'url(#gO)', 1) + p('M13 2V22H9L8 15L2 12V4Z', 'none', '#f09838', 1) + p('M12 0V24', '#333', 'none', 1.2, DASH),
    tube: p('M3 11L16 2Q24 3 22 11L10 21Z', '#3c50a0', 'url(#gB)', 1) + ring(7, 16, 6, '#3c50a0', '#b8c8f0', 1) + ring(7, 16, 3, '#222', '#384468', 1),
    nx5: box(5, 4, 10, 10, 3, '#a8c0ff', '#d8e4ff', '#4468d0', '#3050b0') + ring(10, 9, 2.5, '#c04810', '#ff9040', 1) + p('M0 20H7M4 17L8 20L4 23', RED, 'none', 2) + txt(8, 24, 8, '#333080', 'NX5', 'font-bold'),
    hole: box(2, 7, 14, 15, 5, '#a8c0ff', '#d8e4ff', '#4468d0', '#3050b0') + ring(8, 15, 4, '#c04810', '#ff9040', 2),
    pocket: p('M4 5H21L24 20H1Z', '#444', '#f4f4f4', 1) + p('M9 8H17V12L18 16H6L7 11H9Z', '#444', '#fff', 1.2) + p('M10 12H15V16', '#3050c0'),
    offs: p('M1 9Q7 2 14 7L16 11Q9 8 3 14Z', '#3060c0', '#8cb8f8', 1) + p('M1 13Q8 7 15 13V17Q8 12 3 18Z', '#c08010', '#ffd070', 1) + p('M20 3V10M20 21V14', RED, 'none', 2) + p('M17 5L20 1L23 5ZM17 19L20 23L23 19Z', 'none', '#e07020'),
    sphere: ring(12, 12, 10, '#a09020', 'url(#gY)', 1),
    cyl: p('M3 4V20Q12 25 21 20V4Z', '#3450c0', 'url(#gB)', 1) + '<ellipse cx="12" cy="4" rx="9" ry="3" fill="#c8d8ff" stroke="#3450c0"/>',
    cube: box(2, 7, 14, 15, 5, '#9cb4f8', '#d8e4ff', '#4060d0', '#3050b0'),
    cone: p('M12 1L21 20Q12 25 3 20Z', '#3450c0', 'url(#gB)', 1),
    emboss: p('M2 4L8 1H22L17 5Z', '#c08010', '#ffd880', 1) + p('M12 6V14', '#e05020', 'none', 2) + p('M9 10L12 6L15 10Z', 'none', '#e05020') + box(1, 17, 17, 5, 4, '#5080e0', '#a0c4ff', '#3058b8', '#3058b8'),
    bumps: p('M1 15L12 10L23 14L12 21Z', '#3058b0', '#80a8f0', 1) + p('M1 15V18L12 24L23 17V14L12 21Z', '#3058b0', '#4070d0', 1) + [[9, 5], [15, 6], [5, 10], [12, 10], [18, 11], [9, 14], [15, 14]].map(a => ring(a[0], a[1], 2.4, '#b05808', '#f09838', 1)).join(''),
    sew: book,
    brep: p('M6 10L10 5H18V13L14 18H6Z', '#3058c0', '#6a98f0', 1) + p('M6 10H14V18M14 10L18 5', '#2048a8', 'none', 1) + p('M1 15L12 1L23 15', '#c06040', 'none', 1) + p('M1 15L12 23L23 15', '#4060c0', 'none', 1.2),
    mesh: p('M6 2H18L23 9V15L17 22H7L1 15V9Z', '#3058c0', '#dce8fc', 1.2) + p('M6 2L12 6L18 2M12 6L5 12L12 19L19 12ZM1 9L5 12L1 15M23 9L19 12L23 15M7 22L12 19L17 22', '#3058c0', 'none', 1),
    blend: p('M2 8L8 3H21L22 18L16 23H2Z', '#2850b8', '#3868e0', 1) + p('M2 8L8 3H21L17 7Q16 8 16 12H2Z', '#c07010', 'url(#gO)', 1) + p('M3 12H15V22H3Z', 'none', 'url(#gC)'),
    chamf: p('M0 10L6 0H24V24H0Z', 'none', '#b8dcfc') + p('M1 10L9 2L23 6V24H1Z', 'none', '#a8ccf4') + p('M1 7L7 1L23 6L18 13Z', '#905010', '#f8d070', 1) + p('M1 9L18 14', '#e05010', 'none', 3) + p('M3 14H17V24H3Z', 'none', '#d8e8fc'),
    draft: p('M12 2L19 0V12Q19 19 10 22L4 18Q12 14 12 2Z', '#c08010', 'url(#gY)', 1) + p('M1 18Q9 17 12 22H3Z', 'none', '#f08020') + p('M19 0L22 3V17L16 22H10Q19 19 19 12Z', '#5078b8', '#b8d0f0', 1),
    split: box(1, 9, 9, 12, 4, '#9cc8f0', '#c8e4fc', '#6898d8', '#4070b0') + box(10, 9, 9, 12, 4, '#f8b060', '#fcd8a0', '#e09040', '#b06820'),
    shell: p('M2 6L8 2L22 2V19L16 23H2Z', '#2050a8', 'url(#gD)', 1) + p('M8 2H15V12H22L16 16H8L2 14L8 10Z', '#c07010', '#f0a840', 1),
    boxY: p('M3 6L7 2H21V17L17 21', RED, 'none', 1.2, DASH) + p('M2 22V12Q8 4 14 12V22ZM14 12L21 9V18L14 22Z', '#c09010', 'url(#gY)', 1),
    boxR: p('M7 8L18 3V16L14 23V12Z', 'none', '#f0c850') + box(2, 7, 15, 13, 4, 'none', 'none', 'none', RED) + p('M8 11H14V18H8Z', '#40a040', 'none', 1.5),
    boxB: p('M2 6L8 1H22V16L17 22H2Z', RED, 'none', 1, DASH) + p('M5 21V13Q8 6 15 7L20 9V19L15 22H5Z', '#2050a8', 'url(#gD)', 1),
    inst: p('M1 3H11V21H1Z', '#3858b0', 'url(#gB)', 1) + p('M16 12H23V23H16Z', '#3858b0', 'url(#gB)', 1) + '<ellipse cx="6" cy="3" rx="5" ry="2" fill="#dfe8ff" stroke="#3858b0"/>' + p('M13 3L19 9', '#e06020', 'none', 2.5) + dot(19, 9, 2, '#e06020'),
    trim: box(1, 9, 18, 11, 4, '#a8d0f4', '#d0e8fc', '#6898d8', '#4070b0') + p('M10 9V20M10 9L14 5', RED, 'none', 1.5),
    sheet: p('M1 13L13 7L23 12L11 19Z', '#5070b8', '#dce8fc', 1) + p('M1 13V17L11 23L23 16V12L11 19Z', '#5070b8', '#a8c4f0', 1) + p('M3 16L21 4', RED, 'none', 1.2),
    sheets: p('M1 5L8 1L16 4L9 9ZM1 5V8L9 12L16 7V4L9 9Z', '#5070b8', '#c4d8f8', 1) + p('M7 17L14 13L23 16L15 21ZM7 17V20L15 24L23 19V16L15 21Z', '#5070b8', '#c4d8f8', 1) + p('M18 8L22 12', '#e08020', 'none', 3),
    unite: p('M3 9H17V23H3Z', '#111', '#20988c') + ring(15, 9, 6.5, '#111', '#20988c') + p('M4 0V7M0.500 3.500H7.500', RED),
    subtr: p('M3 9H17V23H3Z', '#111', '#20988c') + ring(16, 8, 6.5, '#111', '#d4d4d4') + p('M1 3H7', RED),
    inter: p('M3 9H17V23H3Z', '#111', 'none') + ring(15, 9, 6.5, '#111', 'none') + p('M10 9H17V15Q10 16 10 9Z', '#111', '#20988c') + p('M1 1L6 6M6 1L1 6', RED),
    wrench: p('M10 1H20L23 5V17H10Z', '#6878b8', '#eef0fc', 1) + p('M13 6H20M13 9H20M13 12H20', RED, 'none', 1) + p('M2 22L11 13', '#c09010', 'none', 5) + p('M2 22L11 13', '#ffd850', 'none', 3) + ring(12, 12, 3, '#c09010', '#ffd850', 1.5),
    crvA: p('M2 3Q14 1 17 12H0M17 12H24', '#333', 'none', 1.8) + p('M2 23Q16 22 19 14', '#999', 'none', 1.5, DASH) + p('M13 5L22 16', RED, 'none', 1.8),
    crvB: p('M0 12H13M13 12V24', '#333', 'none', 1.8) + p('M13 0V12H24', '#888', 'none', 1.5) + p('M8 3L21 17', RED, 'none', 2),
    crvC: p('M1 22Q12 22 12 12Q12 2 22 2', '#333', 'none', 2) + p('M11 3L17 9M7 15L13 21', RED, 'none', 2),
    sect: p('M2 2H14L22 11V23H2Z', '#333', '#e0e0e8', 1.5) + p('M14 2L22 11V23H14', '#2838b0', 'none', 2) + p('M3 4L16 16', '#555', 'none', 1, DASH) + p('M12 17H18M16 14L19 17L16 20', '#e07020', 'none', 2),
    crvD: p('M3 22Q13 21 14 3', RED, 'none', 2) + p('M1 22Q8 22 11 17', '#333', 'none', 2.2) + p('M20 5V17M18 6L20 3L22 6M18 15L20 18L22 15', RED, 'none', 1.2),
    crvE: p('M1 8Q6 2 10 5T22 4', '#333', 'none', 2) + p('M1 22Q12 10 23 19', RED, 'none', 2) + p('M12 8V14', '#e07020', 'none', 3),
    gauge: p('M1 1H7V17H22V23H1Z', '#b09020', '#ffe9a0') + p('M7 4H4M7 7H4M7 10H4M7 13H4M10 20V17M13 20V17M16 20V17M19 20V17', '#806010', 'none', 1) + box(10, 5, 9, 9, 3, 'none', 'none', 'none', RED),
    layers: p('M1 4L12 1L19 4L8 8ZM1 4V7L8 11L12 10M1 9V12L8 16M1 14V17L8 21M1 19L8 24', '#506870', '#e4f0e8') + p('M11 8H22V23H11Z', '#5068a8', '#eef') + p('M13 12H20M13 15H20M13 18H20', '#5068a8', 'none', 1.2),
    show: hand + diamond(7, 17, 6), paint: p('M2 6Q8 0 18 3L16 9L12 10L10 23H5L7 12Z', '#b89818', '#ffe070', 1.2) + dot(7, 5, 2, '#40b0e0') + diamond(17, 13, 5.5),
    sel: diamond(8, 8, 6, false) + p('M10 8L21 17H16L18 23L15 24L13 18L10 21Z', '#222', '#fff', 1.2),
    hide1: diamond(8, 6, 6) + diamond(17, 17, 6, false) + p('M1 13L7 18L1 23Z', 'none', '#c82018'),
    hide2: diamond(8, 6, 6) + diamond(17, 17, 6, false) + p('M1 13L7 18L1 23Z', 'none', '#c82018') + p('M23 1L17 6L23 11Z', 'none', '#108030'),
    hide3: diamond(8, 6, 6, false) + diamond(16, 17, 6) + p('M1 13L7 18L1 23Z', 'none', '#108030'),
    grid2: p('M1 6H23M6 1V23M18 1V23', '#8a8088', 'none', 2),
    measure: p('M4 20L20 4', '#2030b0', 'none', 1.2) + p('M5 13L11 19M8 10L14 16M11 7L17 13', RED, 'none', 1.5) + p('M2 17L8 23M15 1L22 8', '#203090', 'none', 1.2) + dot(4, 20, 2.5, '#203090') + dot(20, 4, 2.5, '#203090'),
    ruler: p('M2 8H22M6 5L2 8L6 11M18 5L22 8L18 11', '#1830a0', 'none', 1.8) + p('M1 3V13M23 3V13', '#c02020', 'none', 1.2) + ruler(1, 16, 22),
    line: p('M3 21L20 3', '#222') + dot(3, 21, 2.3) + dot(20, 3, 2.3),
    arc: p('M3 3Q20 2 21 21', '#222') + dot(3, 3, 2.3) + dot(16, 7, 2.3) + dot(21, 21, 2.3),
    rect: p('M2 5H22V20H2Z', '#222') + dot(2, 5, 2.3) + dot(22, 20, 2.3),
    spline: p('M2 14L8 3L9 9M15 14L16 21L22 9', '#888') + p('M2 14Q6 6 11 11T22 9', '#222') + dot(2, 14, 2, '#888') + dot(8, 3, 2, '#888') + dot(8, 10) + dot(15, 13) + dot(16, 21, 2, '#888') + dot(22, 9, 2, '#888'),
    letter: txt(2, 21, 27, '#111', 'A', "font-bold font-['Liberation_Serif']"),
    offc: p('M2 8Q8 0 18 3L22 12L14 22L4 18Z', '#3870b0', '#b8d8f4', 1) + p('M7 14Q4 5 12 5Q18 6 20 14L13 19', '#223', 'none', 2) + dot(7, 14) + dot(19, 6),
    offp: p('M2 22V10L8 2H15V8Q23 9 22 17Q20 23 14 22Z', '#444') + p('M6 18V12L10 7H12V12Q18 11 18 16Q17 19 13 18Z', '#d04848'),
    proj: p('M1 8Q9 2 16 6L23 17Q16 14 9 21Z', '#4070c0', '#d8e8fc', 1) + p('M1 8Q12 8 22 17', RED, 'none', 1.5) + p('M8 7L14 13', '#2030a0', 'none', 2),
    join: p('M8 2Q1 2 3 7Q5 9 9 8M22 3Q14 3 15 9Q12 13 23 12M3 14Q1 21 9 22H14Q22 22 22 17', '#333', 'none', 1.5) + p('M12 8V16', '#e07020', 'none', 3) + p('M3 21Q8 24 11 19', RED),
    wrapc: p('M2 5H12V22H2Z', '#2850b8', 'url(#gC)', 1) + p('M7 5V1H15V19L12 22', '#2850b8', 'none', 1) + p('M13 12H19', '#e07020', 'none', 2) + p('M19 3Q25 12 19 21', RED, 'none', 1.8),
    bridge: p('M8 2Q1 2 3 7Q5 9 9 8M22 3Q14 3 14 8M3 21Q10 24 12 17Q14 12 22 14', '#444', 'none', 1.6) + p('M12 8V17', '#e07020', 'none', 3),
    projd: p('M2 15L12 10L22 16L13 23Z', '#4070c0', '#d8e8fc', 1) + p('M4 1L22 5', '#2030a0', 'none', 1.8) + p('M13 4V12M11 10L13 13L15 10M10 13L16 20', RED, 'none', 1.8),
    isect: p('M9 1H17V16L13 23H9Z', '#4070c0', '#c4dcf8', 1) + p('M1 8L8 6L23 16L13 20Z', '#4070c0', '#a8c8f4', 1) + p('M5 8L18 18', RED, 'none', 2),
    mirror: p('M1 2L12 6V23L1 20ZM12 6L23 2V20L12 23', '#222', '#e8f0e8', 1.2) + box(5, 11, 5, 5, 2, 'none', 'none', 'none', RED) + box(14, 11, 4, 5, 2, 'none', 'none', 'none', RED),
    surf1: patch(), surf2: patch(p('M8 5Q9 12 11 18M15 5Q14 12 16 19', '#5060c8', 'none', 1)), surf3: patch(p('M8 5Q9 12 11 18M15 5Q14 12 16 19M3 10Q12 12 20 10M5 15Q12 15 19 15', '#4050b8', 'none', 1)),
    surf4: patch(p('M3 11Q12 13 19 10M8 6V17', '#4050b8', 'none', 1) + p('M8 14Q7 8 12 8Q17 8 16 14Z', '#206080', '#90d0e8')),
    surf5: p('M9 4L21 8L14 22L3 16Z', '#777', '#f4f0ea', 1) + p('M9 4Q16 8 21 8M3 16Q8 20 14 22', '#e05020', 'none', 2) + p('M7 10L17 15M13 5L7 18M17 7L11 20', '#888', 'none', 1) + p('M2 3L7 5M19 16L22 20', '#e08020', 'none', 3),
    surf6: p('M5 2L22 8L17 16L1 10Z', '#6060c0', '#c8c8f8', 1) + p('M4 5L20 11M2 8L18 14M9 3L5 12M14 5L9 13M18 7L13 15', '#6060c0', 'none', 1) + p('M3 15V20M11 17V22M19 17L22 21', '#e08020', 'none', 3),
    surf7: p('M2 5Q9 8 12 3Q16 0 23 6V14Q17 10 13 15Q8 20 3 15Z', '#444', '#f4f4f0', 1.2) + p('M3 15Q10 18 14 13Q18 10 23 14V18Q14 15 10 20Z', 'none', '#283c98'),
    surf8: p('M1 3Q6 6 10 2V16Q6 19 1 15Z', '#4070c0', 'url(#gC)', 1) + p('M11 9Q17 12 22 8V22Q16 24 11 21Z', '#c08010', 'url(#gO)', 1) + p('M5 18Q6 22 10 21M13 3Q18 2 19 6', '#e06020', 'none', 1.8),
    surf9: p('M1 14Q4 5 12 1Q17 7 23 10Q14 14 11 23Q6 17 1 14Z', RED, '#f0d8d8', 1.5) + p('M7 13Q9 8 12 6L17 11Q13 14 11 18Z', '#4050b0', '#c8c8f0', 1) + p('M9 10L14 15M13 9L9 15', '#4050b0', 'none', 1),
    cross: p('M1 11L8 9V13L16 12V7L23 12V18L14 20L1 18Z', '#2050a8', '#4080e0', 1) + p('M6 2L15 1V10L12 23H8V12L6 11Z', '#b06010', 'url(#gO)', 1) + p('M10 2V24', RED, 'none', 1),
    bendO: p('M9 0H24V14Q20 18 15 18L11 14Q9 10 9 0Z', 'none', 'url(#gO)') + p('M1 23Q3 14 11 14L16 18L12 24H1Z', '#c07010', '#ffb030', 1) + p('M11 14L16 18L24 13', RED, 'none', 1),
    surfT: p('M1 20Q8 14 6 5L16 1L23 6Q16 9 19 16L11 24Q7 19 1 20Z', 'none', 'url(#gD)', 1, 'opacity=".6"') + p('M9 2L19 11', RED, 'none', 1.5, DASH),
    sewU: book + p('M5 9Q8 0 14 2Q17 4 16 8M2 5L5 11L10 6', '#101828', 'none', 2),
    sewP: p('M1 7Q7 4 10 7V19Q6 16 1 19ZM22 5Q16 4 14 7V17Q18 15 22 17Z', '#2c70c8', 'url(#gC)', 1) + p('M12 3V22', '#555', 'none', 1.5) + p('M9 5L12 0L15 5Z', 'none', '#e08020'),
    zi: txt(0, 21, 23, '#2f6fd0', '字', 'font-light'), dimX: p('M3 1V16M1 1H5M1 16H5M6 21H22M6 18V24M22 18V24', SK, 'none', 1.5) + p('M9 1L21 15M21 1L9 15', OR, 'none', 1.8),
    boxO: box(2, 7, 15, 15, 5, '#ffd870', '#ffe9a8', '#ffd870', '#a06810') + p('M6 11H14V18H6ZM2 22L6 18', '#a06810', '#e8e8e8', 1),
    boxS: box(2, 7, 15, 15, 5, '#ffd860', '#ffe9a8', '#f0c040', '#a06810'),
    colors: ['#e85848', '#30a050', '#28a8b8', '#3878d8', '#9050d0', '#d878d8'].map((c, i) => `<rect x="${i % 3 * 8 + 1}" y="${Math.floor(i / 3) * 10 + 3}" width="7" height="9" fill="${c}"/>`).join(''),
    brush: p('M10 9V3Q12 -1 14 3V9H20L22 16H2L4 9Z', SK, '#b8dcf4') + p('M3 17V23M7 17V23M11 17V23M15 17V23M19 17V23', '#c89020', 'none', 2.5),
    redboxB: p('M3 6L8 1H22V17L17 22H3ZM3 6H17L22 1M17 6V22M8 1V17M8 17L3 22', SK, '#e8f4fc', 1.3) + p('M6 8L11 6L16 8V17L11 20L6 17Z', 'none', '#e02018') + p('M6 8L11 10L16 8L11 6Z', 'none', '#ff8880'),
    frame: p('M5 5H19V19H5Z', 'none', '#c8e4f8') + p('M5 1V23M19 1V23M1 5H23M1 19H23', OR),
    boxT: box(1, 9, 18, 11, 4, '#c8e4f8', '#e0f0fc', '#c8e4f8', SK) + p('M9 9L13 5V16L9 20Z', '#a06810', '#ffd860', 1),
    rotT: p('M1 9L9 1L16 8L8 16ZM9 17H22V23H9Z', SK) + p('M17 6Q21 8 20 14M17 11L20 15L22 11', OR),
    arrT: box(1, 7, 7, 14, 4, 'none', 'none', 'none', SK) + box(12, 7, 7, 14, 4, 'none', 'none', 'none', SK) + p('M5 13H18M15 10L18 13L15 16', OR),
    rulT: box(1, 7, 9, 16, 5, '#d0e8f8', '#e4f2fc', '#d0e8f8', SK) + p('M19 2H23V23H19ZM21 5H23M21 8H23M21 11H23M21 14H23M21 17H23', OR),
    crossT: p('M12 1V9M12 15V23M1 12H9M15 12H23M12 11V13M11 12H13', OR, 'none', 1.8),
    axesT: p('M4 2V20M2 5L4 1L6 5M4 20L15 9M11 9L15 8L15 12M4 20H21M18 17L22 20L18 23', SK, 'none', 1.3),
    f8: txt(-1, 17, 20, '#d08020', 'F8') + p('M15 23H22V19', OR, 'none', 1.2), xii: p('M1 2L13 22M13 2L1 22', '#d08020', 'none', 1.8) + p('M16 2V22M19 2V22', SK, 'none', 2, DASH) + p('M23 2V22', SK, 'none', 1.5),
    selbox: p('M2 3H21V21H2Z', '#222', 'none', 1.3, DASH) + dot(2, 3) + dot(21, 21),
    asmG: p('M2 6L9 9V23L2 20Z', '#888', '#9a9a9a') + ring(8, 7, 5, '#999') + p('M8 0V14M1 7H15', '#999') + ring(19, 8, 3.5, '#8f8c7c', 'none', 2.5) + ring(19, 15, 3.5, '#8f8c7c', 'none', 2.5),
    filtG: p('M1 7L7 1V4Q15 4 16 11Q12 9 7 10V13Z', '#7c9098', '#8aa0a8', 1) + p('M11 13H23L19 17V23H16V17Z', '#999078', '#aaa488', 1),
    filtR: ring(9, 10, 5, '#555') + p('M9 1V19M0 10H18', '#444') + p('M11 11H23L19 16V23H16V16Z', '#c09010', '#ffe040', 1),
    undoG: p('M3 8Q9 -1 14 6M1 3V9H7', '#888', 'none', 2) + ring(15, 16, 5, '#888') + p('M15 9V23M8 16H22', '#888'),
    pinG: p('M2 5Q10 -2 16 4L14 9L9 7L3 9Z', '#888', '#999', 1) + p('M14 10H20V14H14ZM16 17H22V22H16ZM13 12V22', '#888', '#bbb'),
    faceW: p('M1 10L9 2L15 3L9 11L8 21L2 18Z', '#444', '#f4f4fc', 1) + p('M9 11L15 3Q22 5 23 10V17L17 21V14Q14 12 13 21L8 21Z', '#444', '#dce4f4', 1) + p('M8 7L13 9', RED, 'none', 2),
    cubeR: iso('#4890f0', '#b0d8ff', '#3060d8', '#2050b0') + p('M10 4V12L18 15', RED, 'none', 1.2),
    snap0: p('M-1 2L4 6L-1 10Z', 'none', '#108030') + p('M-1 15L4 19L-1 23Z', 'none', RED) + ring(14, 12, 6.5, '#444', '#fff', 1.2) + dot(14, 12, 3, '#f0c818') + [[14, 4], [14, 20], [7, 12], [21, 12]].map(a => p(`M${a[0] - 2.5} ${a[1]}l2.500 -2.500l2.500 2.500l-2.500 2.500Z`, '#222', '#fff', 1.2)).join(''),
    snap1: ring(9, 9, 6, '#777', '#eee', 1.2) + dot(9, 9, 3, '#f0d850') + [[9, 2], [9, 16], [2, 9], [16, 9]].map(a => p(`M${a[0] - 2} ${a[1]}l2 -2l2 2l-2 2Z`, '#666', '#fff', 1.2)).join('') + p('M11 19L16 14V17Q21 18 21 13Q26 21 16 21V24Z', '#107888', '#30a0b0', 1),
    snapE: p('M2 22L21 3', '#333') + dot(21, 3, 2.5), snapM: p('M3 21L21 3', '#333') + dot(12, 12, 2.5),
    snapC: p('M2 1Q12 1 12 12Q12 23 22 23', '#333') + dot(12, 12, 2.5), snapX: p('M12 1V23M1 16Q12 4 23 16', '#333') + dot(12, 10, 2.5),
    snapO: ring(12, 12, 10.5) + dot(12, 12, 2) + p('M12 9V15M9 12H15', RED), snapQ: ring(12, 12, 9.5) + dot(12, 2.5, 2.5) + dot(12, 21.5, 2.5) + dot(2.5, 12, 2.5) + dot(21.5, 12, 2.5),
    snapP: p('M12 2V22M2 12H22', '#333') + dot(12, 12, 2.3), snapL: p('M3 21L21 3', '#333') + dot(6, 18, 2.5),
    snapF: p('M1 16Q3 5 9 1Q15 4 23 1Q15 9 16 23Q9 16 1 16Z', '#6080b8', 'url(#gC)', 1) + dot(13, 8, 2.3),
    gridR: p('M3 1L20 7V23L3 18ZM7 2V19M11 4V20M16 5V22M3 5L20 11M3 10L20 15M3 14L20 19', '#222', '#bbb', 1.3) + dot(15, 10, 2.3),
    saveV: p('M7 1H23V16H7Z', '#2048a0', '#f0f4ff', 1.5) + p('M7 2H23', '#2048a0', 'none', 3) + p('M1 13H12V23H1Z', '#102048', '#3c5ca8') + p('M4 13H9V17H4Z', 'none', '#fff') + p('M15 22H24', '#222', 'none', 2, DASH),
    mirR: box(1, 7, 7, 12, 3, '#eee', '#eee', '#ddd', '#222') + p('M9 6L15 2V18L9 23Z', '#444', '#cfe0d0', 1) + box(13, 8, 7, 11, 3, 'none', 'none', 'none', RED),
    ang: p('M2 1V23H21M2 10Q13 10 15 23', RED) + p('M8 1L23 14L19 19L4 6Z', '#b09020', '#ffe9a0', 1) + p('M10 3L8 5M13 5L11 8M16 8L14 10M19 11L17 13', '#806010', 'none', 1),
    flagS: p('M6 7L9 16M10 7L13 16M14 7L17 16M5 12H19', '#707c84', 'none', 1.8), full: p('M2 7V2H7M17 2H22V7M22 17V22H17M7 22H2V17', '#444', 'none', 2) + p('M6 6H18V18H6Z', '#444', '#f4f8fc') + p('M8 9H16V16H8Z', 'none', '#2c78d8'),
    sketch: p('M1 1L18 5V24L1 20Z', '#222', '#f0f4ec') + p('M4 5L10 6V11L4 10ZM4 13L8 14V18L4 17ZM10 15L15 16V20L10 19Z', '#222', 'none', 1.3) + p('M18 0L20 5L25 5L20 8L23 13L17 10L13 12L15 7L12 3L17 5Z', 'none', '#f4e418'),
    finish: '<rect x="0" y="0" width="24" height="24" fill="#8ca4b4"/>' + p('M4 4L8 22', '#68747c', 'none', 2) + p('M4 5L20 3L22 12L7 15Z', 'none', '#9a9ea0') + p('M5 6L21 4M6 10L22 8M7 14L22 12', '#6c7478', 'none', 2, 'stroke-dasharray="3 3"'),
    prof: p('M2 1V12Q2 20 8 20Q12 19 12 12Q12 6 17 6Q22 7 22 12V20', '#222') + dot(2, 12) + dot(12, 12) + dot(22, 12),
    circ: ring(12, 12, 10.5), fil: p('M1 2H12Q22 3 22 12V23', '#9c8c94') + p('M14 2H22V10', '#777', 'none', 1, DASH), cha: p('M1 2H11L22 13V23', '#9c8c94') + p('M13 2H22V11', '#777', 'none', 1, DASH),
    plus: p('M12 2V22M2 12H22', '#222', 'none', 2), tri1: p('M1 3H22M4 1V23M4 3L23 22', '#444'),
    trm: p('M4 1L14 22M0 16H22', '#444', 'none', 1.5) + p('M13 14L19 5L23 8L18 15Z', 'none', '#805828'), ext: p('M4 1L14 22M0 16H16', '#444', 'none', 1.5) + p('M12 16L20 4L23 7L16 15Z', 'none', '#808028'),
    cor: p('M0 11H24M14 1V23', '#444') + p('M8 4L21 18', '#a05050'), adim: p('M1 8V20M23 8V20M2 14H22M5 11L2 14L5 17M19 11L22 14L19 17', '#333') + p('M9 13L16 1L20 1L16 8H20L12 18L14 12Z', 'none', '#607038'),
    cons: p('M1 12L9 3M6 12L14 4M17 9V20M11 20H23', '#555'), sym: p('M1 3V22H22V3M1 3H7V8M22 3H17V8M12 1V5', '#333') + p('M12 6V23', '#333', 'none', 1, DASH) + p('M8 1V8M15 1V8', '#a04040'),
    auto: p('M0 7L5 12L0 17Z', 'none', '#308030') + p('M9 12L17 2M14 12L23 2', '#744') + p('M18 14V23M12 23H24', '#333'),
    pat: p('M1 1H12V11H1ZM10 13H24V23H10Z', '#333') + p('M1 15H8V23H1Z', '#333', '#889') + p('M11 14L19 4L22 7L15 15Z', 'none', '#808040'),
    proA: p('M9 2Q1 0 2 7Q4 11 9 9', '#334', 'none', 2) + p('M2 13L12 8L22 12V20L12 23L2 20Z', 'none', '#506080') + p('M12 10L20 1L23 4L16 11Z', 'none', '#808040'), proB: p('M9 2Q1 0 2 7Q4 11 9 9', '#334', 'none', 2) + p('M2 15L10 13V6H16V13L22 16V20L12 23L2 20Z', 'none', '#506080'),
    chain: link(10, 8) + link(14, 16),
    pLine: p('M2 21L22 4', PU) + dot(2, 21) + dot(22, 4), pAx: p('M9 14V3M9 14L20 9M9 14L20 18', '#888') + p('M7 4L9 0L11 4ZM19 7L24 8L21 12Z', 'none', '#999') + p('M2 15L20 23', PU) + dot(2, 15) + dot(22, 18),
    pPar: p('M2 18L19 3', PU) + dot(2, 18) + p('M6 22L22 8', RED, 'none', 1.5, DASH), pPerp: p('M2 9L23 16', PU) + dot(2, 9) + p('M17 -1L9 22', RED, 'none', 1.5, DASH),
    pTan: p('M2 16L15 7', PU) + dot(2, 16) + ring(18, 12, 5.5, RED, 'none', 1.3, DASH), pTan2: p('M3 11L16 3', PU) + ring(6, 17, 5.5, RED, 'none', 1.3, DASH) + ring(19, 7, 5, RED, 'none', 1.3, DASH),
    pS1: p('M1 13Q3 1 9 2Q13 4 14 8Q20 14 24 3', RED, 'none', 1.3, DASH) + p('M7 17L14 10', PU) + dot(7, 17) + p('M5 13L11 7M7 7H11V11', RED), pS2: p('M1 21Q3 9 8 10Q13 20 18 20Q22 19 24 13', RED, 'none', 1.3, DASH) + p('M10 12L18 5', PU) + dot(18, 5) + p('M10 8L15 2M11 2H15V6', RED),
    pSurf: p('M3 3L20 3V21H3Z', '#345', 'url(#gC)', 1) + p('M8 1V23M1 9H22M3 16H23M18 3V22', '#223', 'none', 1) + dot(8, 1, 1.7) + dot(1, 9, 1.7) + dot(22, 7, 1.7) + dot(23, 16, 1.7) + dot(8, 23, 1.7) + dot(3, 16, 1.7),
    pArc: p('M4 4Q17 7 19 21', PU) + dot(4, 4) + dot(15, 10) + dot(19, 21), pArcT: p('M4 4Q17 9 19 20', PU) + dot(4, 5) + dot(19, 20) + p('M3 0L11 7M15 14L24 20', RED, 'none', 1.3, DASH),
    pArc3: p('M12 3Q20 5 20 12T12 21', PU) + p('M0 3H24M0 21H24M20 0V6M20 18V24', RED, 'none', 1.3, DASH), pArcR: p('M10 14L16 8', RED, 'none', 2) + p('M12 3Q20 5 20 12', PU) + p('M0 3H24M20 0V24', RED, 'none', 1.3, DASH),
    pC3: ring(12, 12, 9.5, PU) + dot(12, 12, 1.3, PU) + dot(12, 2.5) + dot(19, 6) + dot(21.5, 12), pCT: ring(10, 13, 9.5, PU) + dot(10, 13, 1.3, PU) + dot(8, 4) + dot(19, 15) + p('M9 0L24 14', RED, 'none', 1.3, DASH),
    pC2: ring(10, 12, 9.5, PU) + dot(10, 12, 1.3, PU) + p('M0 2.500H24M0 21.500H24M20 0V24', RED, 'none', 1.3, DASH), pCR: ring(10, 12, 9.5, PU) + p('M10 12L17 6', RED, 'none', 2) + dot(10, 12, 1.6) + p('M0 2.500H24M20 0V24', RED, 'none', 1.3, DASH),
    pCC: ring(12, 12, 9.5, PU) + dot(12, 12) + dot(21.5, 12), pCr: ring(12, 12, 9.5, PU) + dot(12, 12) + p('M12 12L18 6', RED, 'none', 2.2), pCt: ring(10, 13, 9.5, PU) + dot(10, 13) + p('M9 0L24 14', RED, 'none', 1.3, DASH),
    tAsm: box(3, 3, 6, 6, 2, '#f8c840', '#ffe890', '#e0a820', '#a07010') + box(6, 8, 6, 5, 2, '#f8c840', '#ffe890', '#e0a820', '#a07010') + box(14, 18, 6, 5, 2, '#f8c840', '#ffe890', '#e0a820', '#a07010') + p('M5 15V24M5 19H10', '#304898', 'none', 2) + p('M15 13H24', '#111', 'none', 1.5),
    tCon: p('M3 1L11 6L3 11ZM20 1L12 6L20 11Z', 'none', '#1838c8') + p('M1 14H10V23H1Z', '#888010', '#ffe840') + p('M14 13L24 23H14Z', '#701010', '#d82818') + p('M11.500 0V24', '#222', 'none', 1, DASH),
    tPart: p('M2 3V10Q7 13 11 10V3Z', '#903070', '#e890c8', 1) + '<ellipse cx="6.500" cy="3" rx="4.500" ry="2" fill="#f4b8dc" stroke="#903070"/>' + p('M15 9H24', '#111', 'none', 1.5) + p('M6 13V24M6 18H11', '#304898', 'none', 2) + ring(17, 19, 4.5, '#a03880') + ring(17, 19, 1.5, '#a03880'),
    tBook: book3, tInfo: ring(8, 16, 7.5, '#1050b0', '#2c80e0') + txt(5.5, 21, 14, '#fff', 'i', 'font-bold') + p('M9 1Q22 2 24 15M9 5Q18 6 20 15', '#4878c0', 'none', 2.2),
    tWeb: p('M4 1H15L21 7V23H4Z', '#4878b8', '#fff') + ring(12, 15, 6, '#306080', '#4080c0') + p('M12 10L16 18H8Z', 'none', '#50d060'),
    tClock: ring(12, 12, 11, '#667', '#dfe8f0', 2) + ring(12, 12, 8.5, '#99a', '#f4f8fc', 1) + p('M12 4V12H19', '#111', 'none', 2),
    tPal: folder + dot(13, 7, 2, '#d04020') + dot(13, 12, 2, '#30a0e0') + dot(13, 17, 2, '#30a040') + p('M17 7H21M17 12H21M17 17H21', '#555'),
    tHue: p('M2 0H11V24H2Z', 'none', 'url(#gR)') + wand, tScn: p('M3 2H10V20H3Z', 'none', '#5090e0') + p('M8 6H23L14 14', '#4070b0', '#a0c8f0') + p('M1 22H10', '#b0b040') + wand,
    tUsr: dot(16, 6, 5, '#c08030') + dot(16, 7, 3, '#f0c898') + p('M9 18Q10 10 17 11Q24 12 24 18Z', 'none', '#308838') + dot(7, 12, 4.5, '#804838') + dot(7, 13, 3, '#f0c898') + p('M0 24Q1 16 7 17Q13 17 14 24Z', 'none', '#9060c8'),
    tImg: folder + p('M11 5H22V16H11Z', 'none', '#e03820') + p('M13 7H20V16H13Z', 'none', '#50a8e8') + p('M13 16L16 11L20 16Z', 'none', '#fff')
};
ICONS.bend = ICONS.draft;

const svg = (name, cls = 'w-6 h-6') => `<svg class="${cls} shrink-0 overflow-visible" viewBox="0 0 24 24">${ICONS[name]}</svg>`;
const TRI = 'inline-block w-0 h-0 border-x-4 border-x-transparent border-t-4 border-t-black shrink-0';
const LABELS = { find: '命令查找器', finish: '完成草图' };

function tool(t) {
    if (t === '|') return '<span class="w-[7px] shrink-0 flex justify-center"><i class="h-full border-l border-[#bdbdbd] border-r border-r-white"></i></span>';
    if (t === 'v') return `<button class="w-[13px] shrink-0 flex items-center justify-center" aria-label="more"><i class="${TRI}"></i></button>`;
    if (t === 'low') return `<button class="w-[14px] shrink-0 flex items-end pb-2 pl-0.5" aria-label="options"><i class="${TRI}"></i></button>`;
    if (t === 'start') return `<button class="w-[73px] shrink-0 flex items-center gap-1 pl-0.5">${svg(t, 'w-[25px] h-[25px]')}<span class="whitespace-nowrap">开始</span><i class="${TRI}"></i></button>`;
    if (LABELS[t]) return `<button class="${t === 'finish' ? 'w-[89px] text-[#999]' : 'w-[103px]'} shrink-0 flex items-center gap-1 pl-[5px] whitespace-nowrap">${svg(t)}${LABELS[t]}</button>`;
    if (t === '*filtR') return `<button class="w-[25px] ml-1 h-7 shrink-0 flex items-center justify-center self-center border-2 border-[#e06060]" aria-label="filtR">${svg('filtR', 'w-5 h-5')}</button>`;
    if (t[0] === '*') return `<button class="flex-1 min-w-0 flex items-center justify-center self-center h-8 rounded-sm border border-[#555] bg-white" aria-label="${t.slice(1)}">${svg(t.slice(1), 'w-[22px] h-[22px]')}</button>`;
    if (t[0] === '~') return `<button class="flex-1 min-w-0 flex items-center justify-center opacity-50" aria-label="${t.slice(1)}">${svg(t.slice(1))}</button>`;
    return `<button class="flex-1 min-w-0 flex items-center justify-center" aria-label="${t}">${svg(t)}</button>`;
}

document.querySelectorAll('[data-tools]').forEach(el => {
    const plain = 'plain' in el.dataset;
    el.classList.add('flex', 'shrink-0', 'items-stretch');
    if (plain) el.classList.add('h-[34px]');
    else el.classList.add('border-l', 'border-t', 'border-r', 'border-b', 'border-t-[#f0f0f0]', 'border-l-[#f0f0f0]', 'border-r-[#b8b8b8]', 'border-b-[#b8b8b8]');
    const grip = plain ? '' : '<span class="w-2 shrink-0 flex items-center pl-1"><i class="h-6 border-l-2 border-dotted border-[#a8a8a8]"></i></span>';
    el.innerHTML = grip + el.dataset.tools.split(' ').map(tool).join('');
});
document.querySelectorAll('[data-icon]').forEach(el => { el.innerHTML = svg(el.dataset.icon, 'w-full h-full'); });
document.querySelectorAll('.tri').forEach(el => el.classList.add(...TRI.split(' ')));
document.querySelectorAll('.combo').forEach(el => {
    el.classList.add('flex', 'h-[18px]', 'shrink-0', 'rounded-sm', 'border', 'border-[#555]', 'bg-white', 'overflow-hidden');
    el.querySelector('select').className = 'appearance-none flex-1 min-w-0 outline-none leading-4';
    el.insertAdjacentHTML('beforeend', '<span class="w-[17px] shrink-0 bg-linear-to-b from-[#cfe6fc] to-[#4f9ae0] flex items-center justify-center"><i class="w-0 h-0 border-x-6 border-x-transparent border-t-8 border-t-black"></i></span>');
});

// menu entries: caption, then its key
const mono = t => `<span class="font-['Liberation_Mono'] text-[11px]">${t}</span>`;
document.getElementById('menu').innerHTML = [['文件', 'F'], ['编辑', 'E'], ['视图', 'V'], ['插入', 'S'], ['格式', 'R'], ['工具', 'T'], ['装配', 'A'], ['信息', 'I'], ['分析', 'L'], ['首选项', 'P'], ['窗口', 'O']]
    .map(([t, k]) => `<button>${t}${mono(`(<u>${k}</u>)`)}</button>`).join('')
    + `<button>${mono('GC ')}工具箱</button><button>燕秀${mono('UG')}模具${mono('8.03')}</button><button>帮助${mono('(<u>H</u>)')}</button>`;

// resource tabs, "-" leaves a wider gap
document.getElementById('tabs').innerHTML = 'tAsm tCon tPart tBook - tInfo - tWeb - tClock tPal tHue tScn tUsr tImg'.split(' ').map(t => {
    if (t === '-') return '<span class="h-3"></span>';
    if (t === 'tClock') return `<button class="h-[46px] shrink-0 ml-1.5 pl-1 bg-[#efefef] rounded-l border border-r-0 border-[#888] flex items-center" aria-label="${t}">${svg(t)}</button>`;
    return `<button class="h-[43px] shrink-0 w-[27px] ml-2 mb-[3px] bg-[#e0e0e0] rounded-l border border-[#777] flex items-center justify-center" aria-label="${t}">${svg(t)}</button>`;
}).join('');

document.getElementById('palette').innerHTML = '*chain | pLine pAx pPar pPerp pTan pTan2 pS1 pS2 pSurf | pArc pArcT pArc3 pArcR | pC3 pCT pC2 pCR | pCC pCr pCt'.split(' ').map(t => {
    if (t === '|') return '<span class="h-[6px] flex items-center"><i class="w-full border-t border-[#bbb] border-b border-b-white"></i></span>';
    const on = t[0] === '*';
    return `<button class="flex-1 min-h-0 flex items-center justify-center ${on ? 'rounded-sm border border-[#555] bg-white' : ''}" aria-label="${t}">${svg(on ? t.slice(1) : t, 'w-[23px] h-[23px]')}</button>`;
}).join('');
</script>
</body>
</html>
